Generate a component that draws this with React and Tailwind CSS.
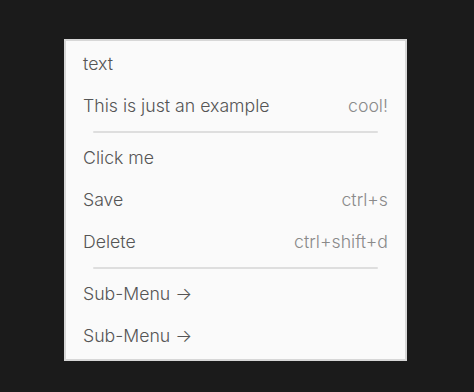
const items = [
  {label: 'text'},
  {label: 'This is just an example', hint: 'cool!'},
  {sep: true},
  {label: 'Click me'},
  {label: 'Save', hint: 'ctrl+s'},
  {label: 'Delete', hint: 'ctrl+shift+d'},
  {sep: true},
  {label: 'Sub-Menu →'},
  {label: 'Sub-Menu →'},
];

export default function App() {
  return (
    <div
      className="w-[474px] h-[392px] bg-[#1b1b1b] pt-[39px] pl-[64px]"
      style={{fontFamily: 'Inter, "Noto Sans", sans-serif'}}>
      <div className="w-[343px] border-2 border-[#d7d7d7] bg-[#fafafa] py-[2px]">
        {items.map((it, i) =>
          it.sep ? (
            <div key={i} className="h-[10px] flex items-center px-[27px]">
              <div className="h-[2px] w-full rounded-full bg-[#dedede]" />
            </div>
          ) : (
            <div
              key={i}
              className="h-[42px] flex items-center justify-between pl-[17px] pr-[17px] text-[17.7px] font-light">
              <span className="text-[#555]">{it.label}</span>
              {it.hint && <span className="text-[#8a8a8a]">{it.hint}</span>}
            </div>
          )
        )}
      </div>
    </div>
  );
}
